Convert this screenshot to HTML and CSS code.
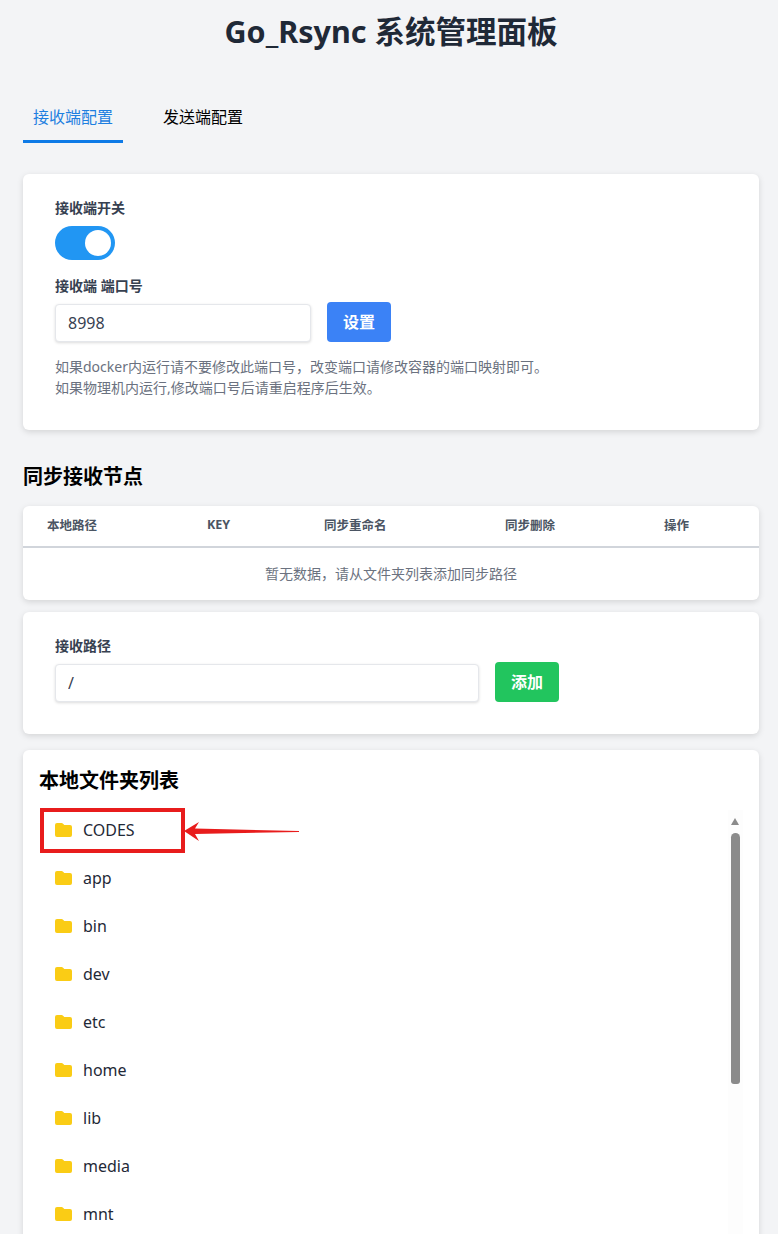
FILE: index.html
```html
<!DOCTYPE html>
<html lang="zh-CN">
<head>
<meta charset="utf-8">
<title>Go_Rsync 系统管理面板</title>
<link rel="stylesheet" href="styles.css">
</head>
<body>
<main class="page">
  <h1 class="title">Go_Rsync 系统管理面板</h1>
  <nav class="tabs">
    <span class="tab active">接收端配置</span>
    <span class="tab">发送端配置</span>
  </nav>

  <section class="card settings">
    <label class="label">接收端开关</label>
    <div class="toggle"><span class="knob"></span></div>
    <label class="label port-label">接收端 端口号</label>
    <div class="form-row">
      <input class="input port-input" value="8998">
      <button class="btn blue">设置</button>
    </div>
    <p class="note">如果docker内运行请不要修改此端口号，改变端口请修改容器的端口映射即可。<br>如果物理机内运行,修改端口号后请重启程序后生效。</p>
  </section>

  <h2 class="section-title">同步接收节点</h2>
  <section class="card table-card">
    <table class="nodes">
      <thead>
        <tr>
          <th class="c1">本地路径</th>
          <th class="c2">KEY</th>
          <th class="c3">同步重命名</th>
          <th class="c4">同步删除</th>
          <th class="c5">操作</th>
        </tr>
      </thead>
      <tbody>
        <tr><td colspan="5">暂无数据，请从文件夹列表添加同步路径</td></tr>
      </tbody>
    </table>
  </section>

  <section class="card add-card">
    <label class="label">接收路径</label>
    <div class="form-row">
      <input class="input path-input" value="/">
      <button class="btn green">添加</button>
    </div>
  </section>

  <section class="card files">
    <h2 class="files-title">本地文件夹列表</h2>
    <div class="file-area">
      <ul class="file-list">
        <li><svg class="folder" viewBox="0 0 17 14"><path d="M2 0h4.6c.5 0 .9.2 1.2.5L9.3 2H15a2 2 0 0 1 2 2v8a2 2 0 0 1-2 2H2a2 2 0 0 1-2-2V2a2 2 0 0 1 2-2z"/></svg>CODES</li>
        <li><svg class="folder" viewBox="0 0 17 14"><path d="M2 0h4.6c.5 0 .9.2 1.2.5L9.3 2H15a2 2 0 0 1 2 2v8a2 2 0 0 1-2 2H2a2 2 0 0 1-2-2V2a2 2 0 0 1 2-2z"/></svg>app</li>
        <li><svg class="folder" viewBox="0 0 17 14"><path d="M2 0h4.6c.5 0 .9.2 1.2.5L9.3 2H15a2 2 0 0 1 2 2v8a2 2 0 0 1-2 2H2a2 2 0 0 1-2-2V2a2 2 0 0 1 2-2z"/></svg>bin</li>
        <li><svg class="folder" viewBox="0 0 17 14"><path d="M2 0h4.6c.5 0 .9.2 1.2.5L9.3 2H15a2 2 0 0 1 2 2v8a2 2 0 0 1-2 2H2a2 2 0 0 1-2-2V2a2 2 0 0 1 2-2z"/></svg>dev</li>
        <li><svg class="folder" viewBox="0 0 17 14"><path d="M2 0h4.6c.5 0 .9.2 1.2.5L9.3 2H15a2 2 0 0 1 2 2v8a2 2 0 0 1-2 2H2a2 2 0 0 1-2-2V2a2 2 0 0 1 2-2z"/></svg>etc</li>
        <li><svg class="folder" viewBox="0 0 17 14"><path d="M2 0h4.6c.5 0 .9.2 1.2.5L9.3 2H15a2 2 0 0 1 2 2v8a2 2 0 0 1-2 2H2a2 2 0 0 1-2-2V2a2 2 0 0 1 2-2z"/></svg>home</li>
        <li><svg class="folder" viewBox="0 0 17 14"><path d="M2 0h4.6c.5 0 .9.2 1.2.5L9.3 2H15a2 2 0 0 1 2 2v8a2 2 0 0 1-2 2H2a2 2 0 0 1-2-2V2a2 2 0 0 1 2-2z"/></svg>lib</li>
        <li><svg class="folder" viewBox="0 0 17 14"><path d="M2 0h4.6c.5 0 .9.2 1.2.5L9.3 2H15a2 2 0 0 1 2 2v8a2 2 0 0 1-2 2H2a2 2 0 0 1-2-2V2a2 2 0 0 1 2-2z"/></svg>media</li>
        <li><svg class="folder" viewBox="0 0 17 14"><path d="M2 0h4.6c.5 0 .9.2 1.2.5L9.3 2H15a2 2 0 0 1 2 2v8a2 2 0 0 1-2 2H2a2 2 0 0 1-2-2V2a2 2 0 0 1 2-2z"/></svg>mnt</li>
      </ul>
      <div class="scrollbar">
        <span class="scroll-arrow"></span>
        <span class="scroll-thumb"></span>
      </div>
      <div class="mark-box"></div>
      <svg class="mark-arrow" viewBox="0 0 116 22"><path d="M0 11 L15 2 L11 8.5 L115 11 L115 12 L11 14 L15 21 Z"/></svg>
    </div>
  </section>
</main>
</body>
</html>
```

FILE: styles.css
```css
* { box-sizing: border-box; }
html, body {
  margin: 0;
  height: 1234px;
  overflow: hidden;
}
body {
  background: #f3f4f6;
  color: #000;
  font-family: "Noto Sans", "Noto Sans CJK SC", sans-serif;
}
.page {
  padding: 0 19px 0 23px;
}
.title {
  margin: 0;
  height: 62px;
  line-height: 62px;
  font-size: 30.5px;
  font-weight: 700;
  text-align: center;
  color: #1f2937;
}
.tabs {
  display: flex;
  gap: 30px;
  margin-top: 30px;
  height: 51px;
}
.tab {
  width: 100px;
  padding-top: 12px;
  height: 51px;
  text-align: center;
  font-size: 16px;
  line-height: 26px;
}
.tab.active {
  color: #1e7fe0;
  border-bottom: 3px solid #0e7ae6;
}
.card {
  background: #fff;
  border-radius: 6px;
  box-shadow: 0 2px 6px rgba(0, 0, 0, .13);
}
.settings {
  margin-top: 31px;
  height: 256px;
  padding: 24px 32px;
}
.label {
  display: block;
  font-size: 14px;
  line-height: 20px;
  font-weight: 700;
  color: #374151;
}
.toggle {
  width: 60px;
  height: 34px;
  margin-top: 8px;
  padding: 4px 4px 4px 30px;
  background: #2196f3;
  border-radius: 17px;
}
.knob {
  display: block;
  width: 26px;
  height: 26px;
  background: #fff;
  border-radius: 50%;
}
.port-label {
  margin-top: 16px;
}
.form-row {
  display: flex;
  align-items: flex-end;
  gap: 16px;
  margin-top: 6px;
}
.input {
  height: 38px;
  padding: 0 12px;
  border: 1px solid #e5e7eb;
  border-radius: 4px;
  background: #fff;
  box-shadow: 0 1px 3px rgba(0, 0, 0, .14);
  font: 16px "Noto Sans", "Noto Sans CJK SC", sans-serif;
  color: #374151;
}
.port-input { width: 256px; }
.path-input { width: 424px; }
.btn {
  width: 64px;
  height: 40px;
  padding: 0 0 3px;
  border: 0;
  border-radius: 4px;
  color: #fff;
  font: 700 16px "Noto Sans CJK SC", sans-serif;
}
.blue { background: #3b82f6; }
.green { background: #22c55e; }
.note {
  margin: 14px 0 0;
  font-size: 14px;
  line-height: 21px;
  color: #6b7280;
}
.section-title {
  margin: 31px 0 0;
  height: 32px;
  line-height: 32px;
  font-size: 20px;
  font-weight: 700;
}
.table-card {
  margin-top: 13px;
  height: 94px;
  overflow: hidden;
}
.nodes {
  width: 100%;
  border-collapse: collapse;
  table-layout: fixed;
}
.nodes th {
  height: 41px;
  padding: 0 0 4px 24px;
  border-bottom: 2px solid #d1d5db;
  text-align: left;
  font-size: 12.5px;
  font-weight: 700;
  color: #4b5563;
}
.c1 { width: 160px; }
.c2 { width: 117px; }
.c3 { width: 181px; }
.c4 { width: 159px; }
.nodes td {
  height: 52px;
  padding-bottom: 2px;
  text-align: center;
  font-size: 14px;
  color: #6b7280;
}
.add-card {
  margin-top: 12px;
  height: 122px;
  padding: 24px 32px;
}
.files {
  position: relative;
  margin-top: 16px;
  padding: 16px;
  height: 700px;
}
.files-title {
  margin: 0;
  height: 30px;
  line-height: 30px;
  font-size: 20px;
  font-weight: 700;
}
.file-area {
  position: relative;
  margin-top: 10px;
}
.file-list {
  margin: 0;
  padding: 0;
  list-style: none;
}
.file-list li {
  display: flex;
  align-items: center;
  height: 48px;
  padding-left: 16px;
  font-size: 16px;
  color: #1f2937;
}
.folder {
  width: 17px;
  height: 14px;
  margin-right: 11px;
  fill: #facc15;
}
.scrollbar {
  position: absolute;
  top: 4px;
  right: 0;
  width: 15px;
  height: 640px;
  background: #fdfdfd;
}
.scroll-arrow {
  position: absolute;
  top: 8px;
  left: 3px;
  width: 0;
  height: 0;
  border-left: 4.5px solid transparent;
  border-right: 4.5px solid transparent;
  border-bottom: 7px solid #8b8b8b;
}
.scroll-thumb {
  position: absolute;
  top: 23px;
  left: 3px;
  width: 9px;
  height: 251px;
  background: #8b8b8b;
  border-radius: 4.5px 4.5px 3px 3px;
}
.mark-box {
  position: absolute;
  top: 2px;
  left: 1px;
  width: 145px;
  height: 45px;
  border: 4px solid #e81c1c;
}
.mark-arrow {
  position: absolute;
  top: 14px;
  left: 145px;
  width: 116px;
  height: 22px;
  fill: #e81c1c;
}
```
